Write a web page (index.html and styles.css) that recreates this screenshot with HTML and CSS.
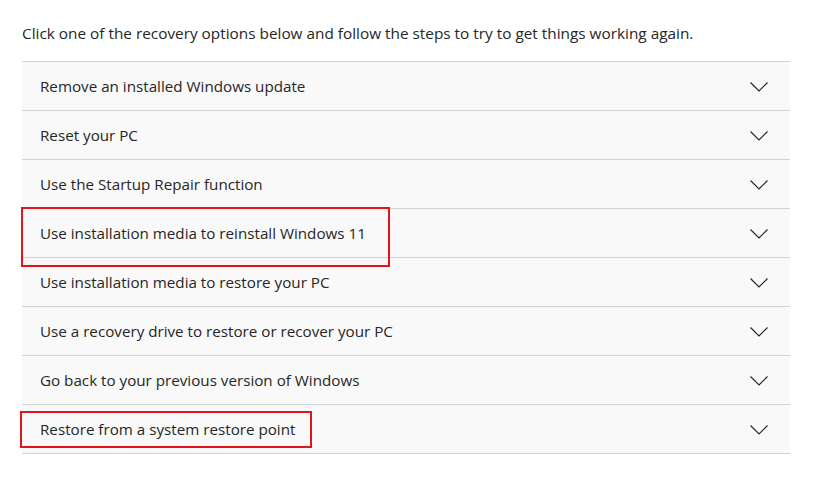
FILE: index.html
```html
<!DOCTYPE html>
<html lang="en">
<head>
<meta charset="utf-8">
<title>Recovery options</title>
<link rel="stylesheet" href="styles.css">
</head>
<body>
<main class="page">
  <p class="intro">Click one of the recovery options below and follow the steps to try to get things working again.</p>
  <div class="accordion">
    <div class="item"><span class="label">Remove an installed Windows update</span><svg class="chev" viewBox="0 0 18 10" width="18" height="10"><path d="M0.5 0.5 L9 9 L17.5 0.5" fill="none" stroke="#262626" stroke-width="1.2"/></svg></div>
    <div class="item"><span class="label">Reset your PC</span><svg class="chev" viewBox="0 0 18 10" width="18" height="10"><path d="M0.5 0.5 L9 9 L17.5 0.5" fill="none" stroke="#262626" stroke-width="1.2"/></svg></div>
    <div class="item"><span class="label">Use the Startup Repair function</span><svg class="chev" viewBox="0 0 18 10" width="18" height="10"><path d="M0.5 0.5 L9 9 L17.5 0.5" fill="none" stroke="#262626" stroke-width="1.2"/></svg></div>
    <div class="item"><span class="label">Use installation media to reinstall Windows 11</span><svg class="chev" viewBox="0 0 18 10" width="18" height="10"><path d="M0.5 0.5 L9 9 L17.5 0.5" fill="none" stroke="#262626" stroke-width="1.2"/></svg></div>
    <div class="item"><span class="label">Use installation media to restore your PC</span><svg class="chev" viewBox="0 0 18 10" width="18" height="10"><path d="M0.5 0.5 L9 9 L17.5 0.5" fill="none" stroke="#262626" stroke-width="1.2"/></svg></div>
    <div class="item"><span class="label">Use a recovery drive to restore or recover your PC</span><svg class="chev" viewBox="0 0 18 10" width="18" height="10"><path d="M0.5 0.5 L9 9 L17.5 0.5" fill="none" stroke="#262626" stroke-width="1.2"/></svg></div>
    <div class="item"><span class="label">Go back to your previous version of Windows</span><svg class="chev" viewBox="0 0 18 10" width="18" height="10"><path d="M0.5 0.5 L9 9 L17.5 0.5" fill="none" stroke="#262626" stroke-width="1.2"/></svg></div>
    <div class="item"><span class="label">Restore from a system restore point</span><svg class="chev" viewBox="0 0 18 10" width="18" height="10"><path d="M0.5 0.5 L9 9 L17.5 0.5" fill="none" stroke="#262626" stroke-width="1.2"/></svg></div>
    <div class="highlight hl-reinstall"></div>
    <div class="highlight hl-restore"></div>
  </div>
</main>
</body>
</html>
```
FILE: styles.css
```css
html, body {
  margin: 0;
  padding: 0;
  background: #ffffff;
}
.page {
  padding: 0 29px 0 22px;
  font-family: "Open Sans", "Noto Sans", "Liberation Sans", sans-serif;
  color: #262626;
}
.intro {
  margin: 0;
  padding: 21px 0 16px;
  font-size: 15.35px;
  line-height: 24px;
  color: #262626;
  white-space: nowrap;
}
.accordion {
  position: relative;
  width: 768px;
  border-top: 1px solid #d2d2d2;
}
.item {
  display: flex;
  align-items: center;
  justify-content: space-between;
  height: 48px;
  padding: 0 22px 0 18px;
  background: #f9f9f9;
  border-bottom: 1px solid #d2d2d2;
  font-size: 15.2px;
}
.label {
  line-height: 20px;
}
.chev {
  display: block;
  margin-top: 2px;
}
.highlight {
  position: absolute;
  border: 2px solid #e3151a;
  box-sizing: border-box;
}
.hl-reinstall {
  left: -1px;
  top: 145px;
  width: 369px;
  height: 60px;
}
.hl-restore {
  left: -2px;
  top: 349px;
  width: 292px;
  height: 37px;
}
```
